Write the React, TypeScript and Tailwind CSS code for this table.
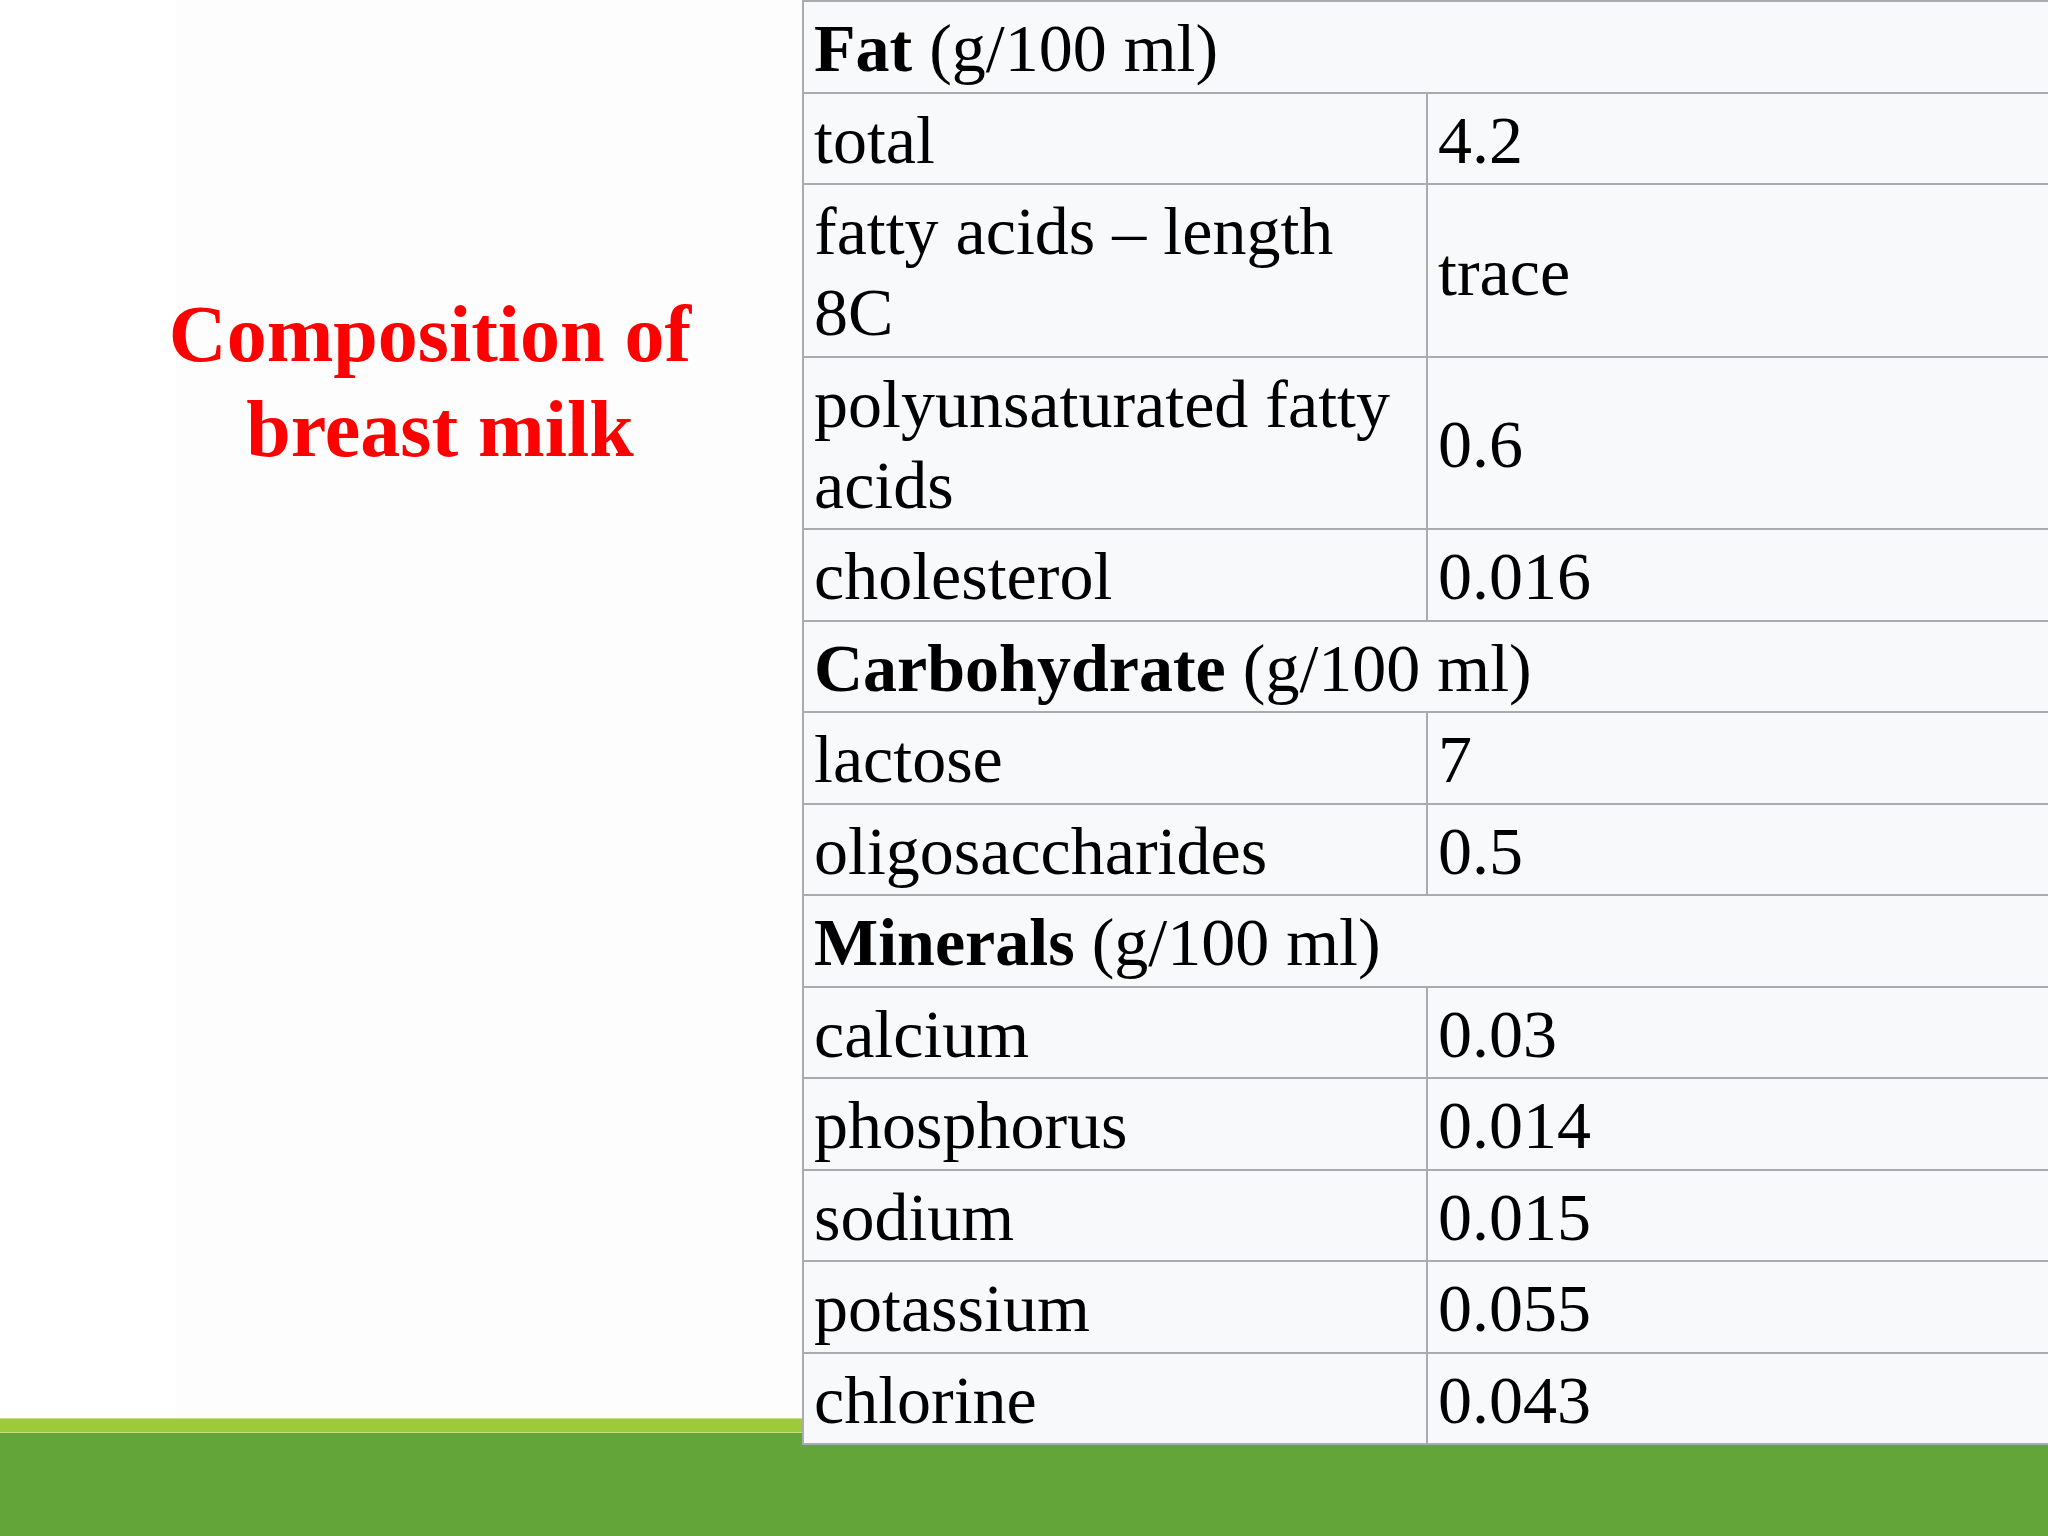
const serif = { fontFamily: '"Liberation Serif", "Times New Roman", serif' };

type Row =
  | { kind: 'head'; label: string }
  | { kind: 'item'; name: string; value: string };

const rows: Row[] = [
  { kind: 'head', label: 'Fat' },
  { kind: 'item', name: 'total', value: '4.2' },
  { kind: 'item', name: 'fatty acids – length 8C', value: 'trace' },
  { kind: 'item', name: 'polyunsaturated fatty acids', value: '0.6' },
  { kind: 'item', name: 'cholesterol', value: '0.016' },
  { kind: 'head', label: 'Carbohydrate' },
  { kind: 'item', name: 'lactose', value: '7' },
  { kind: 'item', name: 'oligosaccharides', value: '0.5' },
  { kind: 'head', label: 'Minerals' },
  { kind: 'item', name: 'calcium', value: '0.03' },
  { kind: 'item', name: 'phosphorus', value: '0.014' },
  { kind: 'item', name: 'sodium', value: '0.015' },
  { kind: 'item', name: 'potassium', value: '0.055' },
  { kind: 'item', name: 'chlorine', value: '0.043' },
];

const cell = 'border-2 border-[#a9abae] px-[10px] pt-[6px] pb-[2.5px] align-middle text-left font-normal';

export default function App() {
  return (
    <div className="flex h-[1536px] w-[2048px] flex-col overflow-hidden bg-white text-black" style={serif}>
      <div className="flex h-[1418px] shrink-0">
        {/* left side: title */}
        <div className="flex w-[802px] shrink-0">
          <div className="w-[176px] shrink-0 bg-white" />
          <div className="flex-1 bg-[#fdfdfd]">
            <h1 className="-ml-[36px] w-[600px] pt-[287px] text-center text-[80px] font-bold leading-[95px] whitespace-nowrap text-[#ff0000]">
              Composition of{'\u00a0'}
              <br />
              breast milk
            </h1>
          </div>
        </div>

        {/* right side: table, runs past the slide edge and over the green band */}
        <div className="relative z-10 w-[1300px] shrink-0">
          <table className="w-[1300px] table-fixed border-collapse bg-[#f8f9fa] text-[68px] leading-[81px]">
            <colgroup>
              <col className="w-[624px]" />
              <col />
            </colgroup>
            <tbody>
              {rows.map((r, i) =>
                r.kind === 'head' ? (
                  <tr key={i}>
                    <td colSpan={2} className={cell}>
                      <b>{r.label}</b> (g/100 ml)
                    </td>
                  </tr>
                ) : (
                  <tr key={i}>
                    <td className={cell}>{r.name}</td>
                    <td className={cell}>{r.value}</td>
                  </tr>
                ),
              )}
            </tbody>
          </table>
        </div>
      </div>

      {/* green footer band */}
      <div className="flex flex-1 flex-col">
        <div className="h-[15px] border-y border-[#c6e07f] bg-[#9dca3b]" />
        <div className="flex-1 bg-[#63a539]" />
      </div>
    </div>
  );
}
